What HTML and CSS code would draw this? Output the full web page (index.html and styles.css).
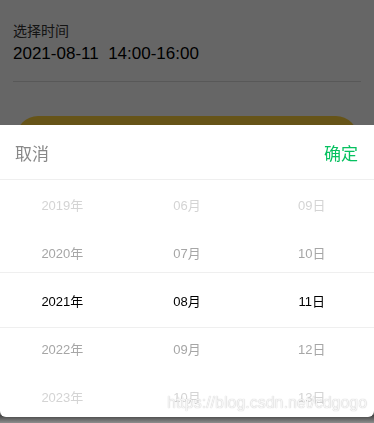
FILE: index.html
```html
<!DOCTYPE html>
<html lang="zh-CN">
<head>
<meta charset="utf-8">
<title>选择时间</title>
<link rel="stylesheet" href="styles.css">
</head>
<body>
<div class="page">
  <div class="field">
    <div class="label">选择时间</div>
    <div class="value">2021-08-11&nbsp;&nbsp;14:00-16:00</div>
  </div>
  <div class="btn"></div>
</div>
<div class="mask"></div>
<div class="base-shadow"></div>
<div class="sheet">
  <div class="sheet-head">
    <span class="cancel">取消</span>
    <span class="ok">确定</span>
  </div>
  <div class="picker">
    <div class="col">
      <div class="item far">2019年</div>
      <div class="item near">2020年</div>
      <div class="item cur">2021年</div>
      <div class="item near">2022年</div>
      <div class="item far">2023年</div>
    </div>
    <div class="col">
      <div class="item far">06月</div>
      <div class="item near">07月</div>
      <div class="item cur">08月</div>
      <div class="item near">09月</div>
      <div class="item far">10月</div>
    </div>
    <div class="col">
      <div class="item far">09日</div>
      <div class="item near">10日</div>
      <div class="item cur">11日</div>
      <div class="item near">12日</div>
      <div class="item far">13日</div>
    </div>
    <div class="band"></div>
  </div>
  <div class="watermark">https://blog.csdn.net/cdgogo</div>
</div>
</body>
</html>
```

FILE: styles.css
```css
html, body {
  margin: 0;
  padding: 0;
}
body {
  width: 374px;
  height: 423px;
  overflow: hidden;
  background: #fff;
  font-family: "Liberation Sans", "Noto Sans CJK SC", sans-serif;
  color: #333;
}
.page {
  padding: 21px 13px 0 13px;
}
.field {
  border-bottom: 1px solid #dcdcdc;
  padding-bottom: 15px;
}
.label {
  font-size: 14px;
  line-height: 20px;
  color: #333;
}
.value {
  margin-top: 1px;
  font-size: 17px;
  line-height: 24px;
  color: #000;
}
.btn {
  margin: 34px 3px 0 3px;
  height: 44px;
  border-radius: 22px;
  background: #ffd23e;
}
.mask {
  position: fixed;
  inset: 0;
  background: rgba(0, 0, 0, 0.6);
}
.base-shadow {
  position: fixed;
  left: 0;
  right: 0;
  bottom: 0;
  height: 8px;
  background: linear-gradient(to bottom, #3f3f3f, #8e8e8e);
}
.sheet {
  position: fixed;
  left: 0;
  right: 0;
  top: 125px;
  height: 292px;
  background: #fff;
  border-radius: 0 0 6px 6px;
  overflow: hidden;
}
.sheet-head {
  height: 54px;
  border-bottom: 1px solid #efefef;
  display: flex;
  align-items: center;
  justify-content: space-between;
  padding: 0 16px 0 15px;
  font-size: 17px;
  font-family: "Noto Sans CJK SC", sans-serif;
}
.cancel {
  color: #888;
}
.ok {
  color: #07c160;
}
.picker {
  position: relative;
  display: flex;
}
.col {
  flex: 1;
  display: flex;
  flex-direction: column;
}
.item {
  height: 48px;
  display: flex;
  align-items: center;
  justify-content: center;
  font-size: 13px;
}
.item.far {
  color: #d4d4d4;
}
.item.near {
  color: #a6a6a6;
}
.item.cur {
  color: #000;
}
.band {
  position: absolute;
  left: 0;
  right: 0;
  top: 92px;
  height: 54px;
  border-top: 1px solid #efefef;
  border-bottom: 1px solid #efefef;
  pointer-events: none;
}
.watermark {
  position: absolute;
  left: 167px;
  top: 268px;
  font-size: 16px;
  line-height: 20px;
  color: #f6f6f6;
  text-shadow: 0 0 1px rgba(0, 0, 0, 0.3);
  white-space: nowrap;
}
```
